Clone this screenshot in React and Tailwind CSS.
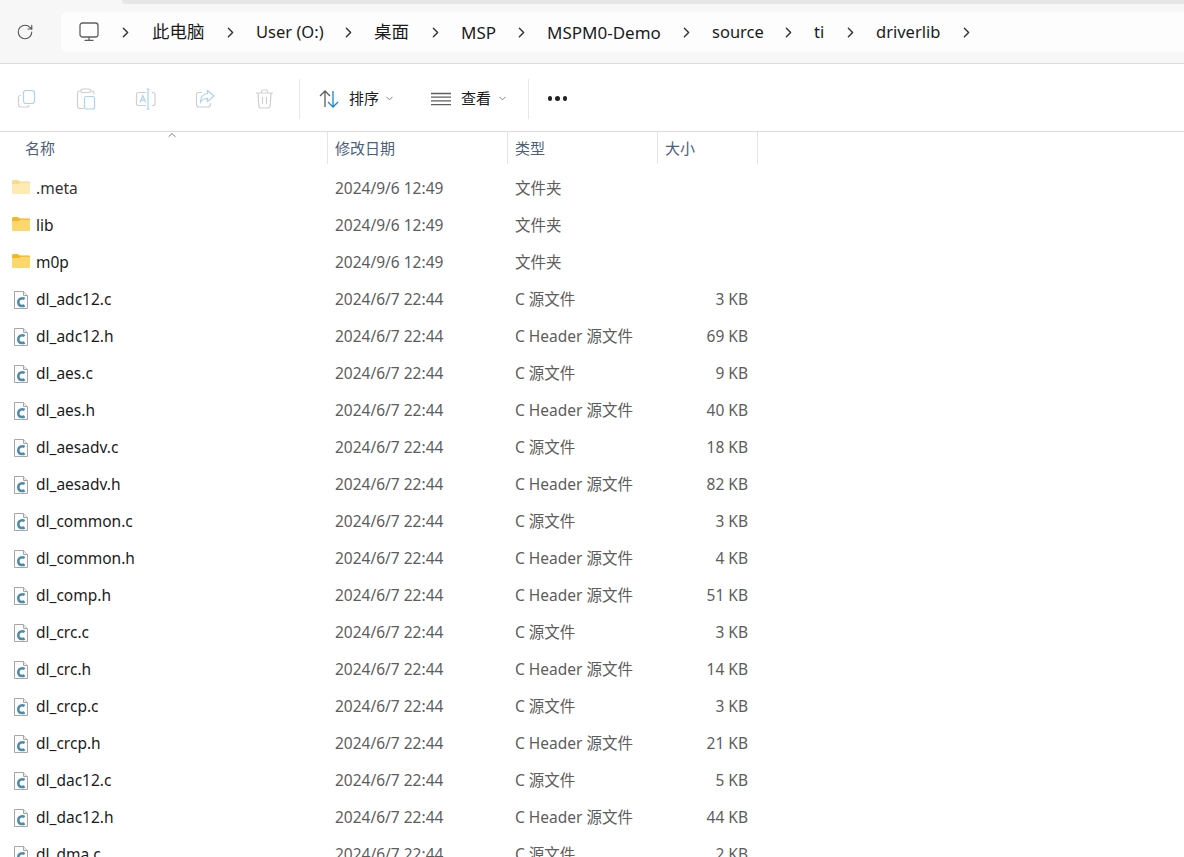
import { LuChevronRight, LuChevronDown, LuChevronUp, LuRotateCw } from "react-icons/lu";

const crumbs = [
  { label: "此电脑", w: "w-[53px]", size: "text-[17.500px]" },
  { label: "User (O:)", w: "w-[67px]", size: "text-[16.500px]" },
  { label: "桌面", w: "w-[36px]", size: "text-[17.500px]" },
  { label: "MSP", w: "w-[35px]", size: "text-[17px]" },
  { label: "MSPM0-Demo", w: "w-[114px]", size: "text-[17px]" },
  { label: "source", w: "w-[51px]", size: "text-[16.500px]" },
  { label: "ti", w: "w-[11px]", size: "text-[16.500px]" },
  { label: "driverlib", w: "w-[65px]", size: "text-[16.500px]" },
];

const files = [
  ["dl_adc12.c", "2024/6/7 22:44", "C 源文件", "3 KB"],
  ["dl_adc12.h", "2024/6/7 22:44", "C Header 源文件", "69 KB"],
  ["dl_aes.c", "2024/6/7 22:44", "C 源文件", "9 KB"],
  ["dl_aes.h", "2024/6/7 22:44", "C Header 源文件", "40 KB"],
  ["dl_aesadv.c", "2024/6/7 22:44", "C 源文件", "18 KB"],
  ["dl_aesadv.h", "2024/6/7 22:44", "C Header 源文件", "82 KB"],
  ["dl_common.c", "2024/6/7 22:44", "C 源文件", "3 KB"],
  ["dl_common.h", "2024/6/7 22:44", "C Header 源文件", "4 KB"],
  ["dl_comp.h", "2024/6/7 22:44", "C Header 源文件", "51 KB"],
  ["dl_crc.c", "2024/6/7 22:44", "C 源文件", "3 KB"],
  ["dl_crc.h", "2024/6/7 22:44", "C Header 源文件", "14 KB"],
  ["dl_crcp.c", "2024/6/7 22:44", "C 源文件", "3 KB"],
  ["dl_crcp.h", "2024/6/7 22:44", "C Header 源文件", "21 KB"],
  ["dl_dac12.c", "2024/6/7 22:44", "C 源文件", "5 KB"],
  ["dl_dac12.h", "2024/6/7 22:44", "C Header 源文件", "44 KB"],
  ["dl_dma.c", "2024/6/7 22:44", "C 源文件", "2 KB"],
];

const PcIcon = () => (
  <svg width="20" height="20" viewBox="0 0 20 20" fill="none" stroke="#5f5f5f" strokeWidth="1.3">
    <rect x="1" y="1" width="18" height="14" rx="2.500" />
    <path d="M10 15v3M5.500 18.400h9" />
  </svg>
);

const CopyIcon = () => (
  <svg width="20" height="20" viewBox="0 0 20 20" fill="none" strokeWidth="1.2">
    <path d="M4 6.500H3.500A2 2 0 0 0 1.500 8.500v7a2.500 2.500 0 0 0 2.500 2.500h6A2 2 0 0 0 12 16" stroke="#cfcfcf" />
    <rect x="6.500" y="1.500" width="11" height="13" rx="2.500" stroke="#a9d3f3" />
  </svg>
);

const PasteIcon = () => (
  <svg width="20" height="22" viewBox="0 0 20 22" fill="none" strokeWidth="1.2">
    <path d="M5 3H3.500A2 2 0 0 0 1.500 5v13a2.500 2.500 0 0 0 2.500 2.500h4M15 3h1a2 2 0 0 1 2 2v1.500" stroke="#cfcfcf" />
    <rect x="5" y="1" width="9.500" height="3.500" rx="1.500" stroke="#cfcfcf" />
    <rect x="8.500" y="8.500" width="10" height="12.500" rx="2" stroke="#a9d3f3" />
  </svg>
);

const RenameIcon = () => (
  <svg width="22" height="22" viewBox="0 0 22 22" fill="none" strokeWidth="1.2">
    <path d="M11 4.500H3.500A2 2 0 0 0 1.500 6.500v9a2 2 0 0 0 2 2H11M17 4.500h1a2 2 0 0 1 2 2v9a2 2 0 0 1-2 2h-1" stroke="#cfcfcf" />
    <path d="M11.500 1h3M13 1v20M11.500 21h3" stroke="#a9d3f3" />
    <path d="M5 14.500l2.800-7 2.800 7M6 12.200h3.600" stroke="#a9d3f3" />
  </svg>
);

const ShareIcon = () => (
  <svg width="20" height="20" viewBox="0 0 20 20" fill="none" strokeWidth="1.2">
    <path d="M7 3.500H3.500a2 2 0 0 0-2 2v10a2.500 2.500 0 0 0 2.500 2.500h9a2.500 2.500 0 0 0 2.500-2.500V14" stroke="#cfcfcf" />
    <path d="M12.500 1.500l6.500 5.500-6.500 5.500V9.500c-3.500 0-5.500 1-7 3.500 0-5 2.500-8 7-8.500z" stroke="#a9d3f3" />
  </svg>
);

const TrashIcon = () => (
  <svg width="19" height="20" viewBox="0 0 18 20" fill="none" stroke="#cfcfcf" strokeWidth="1.2">
    <path d="M.5 4h17M6 4V2.500A1.500 1.500 0 0 1 7.500 1h3A1.500 1.500 0 0 1 12 2.500V4M2.500 4l.8 12.500a2.500 2.500 0 0 0 2.500 2.500h6.400a2.500 2.500 0 0 0 2.500-2.500L15.500 4M7 8v7M11 8v7" />
  </svg>
);

const SortIcon = () => (
  <svg width="20" height="18" viewBox="0 0 20 18" fill="none" strokeWidth="1.3">
    <path d="M6 17V1M1 6l5-5 5 5" stroke="#5c5c5c" />
    <path d="M14 1v16M9 12l5 5 5-5" stroke="#1a86d9" />
  </svg>
);

const ViewIcon = () => (
  <svg width="20" height="14" viewBox="0 0 20 14" fill="none" strokeWidth="1.300" stroke="#5f5f5f">
    <path d="M0 1.500h20M0 5.200h20M0 8.900h20M0 12.600h20" />
  </svg>
);

const FolderIcon = ({ faded }) => (
  <svg width="18" height="14" viewBox="0 0 18 14" className={`-mt-[4px] ${faded ? "opacity-50" : ""}`}>
    <path d="M0 1.500A1.500 1.500 0 0 1 1.500 0h4L8 1.500h9a1 1 0 0 1 1 1V5H0z" fill="#f5b622" />
    <path d="M0 4h7l1.500-1.200H17a1 1 0 0 1 1 1V13a1 1 0 0 1-1 1H1a1 1 0 0 1-1-1z" fill="#fcd76e" />
  </svg>
);

const CFileIcon = () => (
  <svg width="14" height="18" viewBox="0 0 14 18" fill="none">
    <path d="M.5.500h9l4 4v13H.500z" fill="#fcfcfc" stroke="#a6a6a6" />
    <path d="M9.500.500v4h4" fill="#ececec" stroke="#a6a6a6" />
    <path d="M10.600 8A3.800 3.800 0 0 0 8.200 7.200C5.900 7.200 4.300 8.900 4.300 11.200s1.500 3.800 3.800 3.800c1 0 1.900-.3 2.500-.7" stroke="#4a8bab" strokeWidth="2.600" />
  </svg>
);

const Crumb = ({ label, w, size }) => (
  <div className="flex items-center">
    <span className={`${w} ${size} whitespace-nowrap leading-none text-[#1b1b1b]`}>{label}</span>
    <span className="flex w-[51px] justify-center">
      <LuChevronRight className="text-[#333333]" size={17} />
    </span>
  </div>
);

const ToolBtn = ({ children }) => (
  <span className="flex w-[59.500px] items-center justify-center">{children}</span>
);

const Column = ({ title, w }) => (
  <div className={`${w} flex h-[32px] items-center border-l border-[#e5e5e5] pl-[7px] text-[15px] text-[#4c607a]`}>
    {title}
  </div>
);

const Row = ({ icon, name, date, type, size, faded, left }) => (
  <div className="flex h-[37px] items-center pt-[2px] text-[15.500px]">
    <span className={`flex w-[36px] shrink-0 ${left}`}>{icon}</span>
    <span className={`w-[291px] whitespace-nowrap ${faded ? "text-[#333333]" : "text-[#1b1b1b]"}`}>{name}</span>
    <span className="w-[180px] whitespace-nowrap pl-[8px] text-[#5d5d5d]">{date}</span>
    <span className="w-[150px] whitespace-nowrap pl-[8px] text-[#5d5d5d]">{type}</span>
    <span className="w-[91px] whitespace-nowrap text-right text-[#5d5d5d]">{size}</span>
  </div>
);

const App = () => {
  return (
    <div className="flex h-[857px] w-[1184px] flex-col overflow-hidden bg-white font-['Noto_Sans','Noto_Sans_CJK_SC',sans-serif]">
      <div className="relative flex h-[64px] shrink-0 items-center border-b border-[#dcdcdc] bg-[#f7f7f7]">
        <div className="absolute left-[122px] right-0 top-0 h-[4px] rounded-bl-md bg-[#e6e6e6]" />
        <span className="flex w-[61px] shrink-0 justify-center pr-[12px]">
          <LuRotateCw className="text-[#555555]" size={18} strokeWidth={1.5} />
        </span>
        <div className="flex h-[40px] flex-1 items-center rounded-l-md bg-[#fdfdfd] pl-[18px] pt-[1px]">
          <span className="flex w-[37px] shrink-0"><PcIcon /></span>
          <span className="flex w-[18px] shrink-0 justify-center">
            <LuChevronRight className="text-[#333333]" size={17} />
          </span>
          <div className="ml-[18px] flex items-center">
            {crumbs.map((c) => <Crumb key={c.label} label={c.label} w={c.w} size={c.size} />)}
          </div>
        </div>
      </div>

      <div className="flex h-[68px] shrink-0 items-center border-b border-[#dcdcdc] pt-[2px]">
        <div className="-ml-[3px] flex items-center">
          <ToolBtn><CopyIcon /></ToolBtn>
          <ToolBtn><PasteIcon /></ToolBtn>
          <ToolBtn><RenameIcon /></ToolBtn>
          <ToolBtn><ShareIcon /></ToolBtn>
          <ToolBtn><TrashIcon /></ToolBtn>
        </div>
        <div className="ml-[4.500px] h-[40px] w-px bg-[#e8e8e8]" />
        <div className="ml-[19px] flex items-center">
          <SortIcon />
          <span className="ml-[10px] text-[15px] text-[#1b1b1b]">排序</span>
          <LuChevronDown className="ml-[5px] text-[#777777]" size={11} />
        </div>
        <div className="ml-[36px] flex items-center">
          <ViewIcon />
          <span className="ml-[10px] text-[15px] text-[#1b1b1b]">查看</span>
          <LuChevronDown className="ml-[6px] text-[#777777]" size={11} />
        </div>
        <div className="ml-[19.500px] h-[40px] w-px bg-[#e8e8e8]" />
        <div className="ml-[19px] flex gap-[3px]">
          <span className="size-[4.500px] rounded-full bg-[#222222]" />
          <span className="size-[4.500px] rounded-full bg-[#222222]" />
          <span className="size-[4.500px] rounded-full bg-[#222222]" />
        </div>
      </div>

      <div className="relative flex shrink-0 pb-[5px]">
        <div className="flex h-[32px] w-[327px] items-center pl-[25px] text-[15px] text-[#4c607a]">名称</div>
        <LuChevronUp className="absolute left-[166px] top-[-3px] text-[#777777]" size={12} />
        <Column title="修改日期" w="w-[180px]" />
        <Column title="类型" w="w-[150px]" />
        <Column title="大小" w="w-[101px] border-r" />
      </div>

      <div className="flex flex-col">
        <Row icon={<FolderIcon faded />} left="pl-[12px]" name=".meta" date="2024/9/6 12:49" type="文件夹" faded />
        <Row icon={<FolderIcon />} left="pl-[12px]" name="lib" date="2024/9/6 12:49" type="文件夹" />
        <Row icon={<FolderIcon />} left="pl-[12px]" name="m0p" date="2024/9/6 12:49" type="文件夹" />
        {files.map((f) => (
          <Row key={f[0]} icon={<CFileIcon />} left="pl-[14px]" name={f[0]} date={f[1]} type={f[2]} size={f[3]} />
        ))}
      </div>
    </div>
  );
};

export default App;
